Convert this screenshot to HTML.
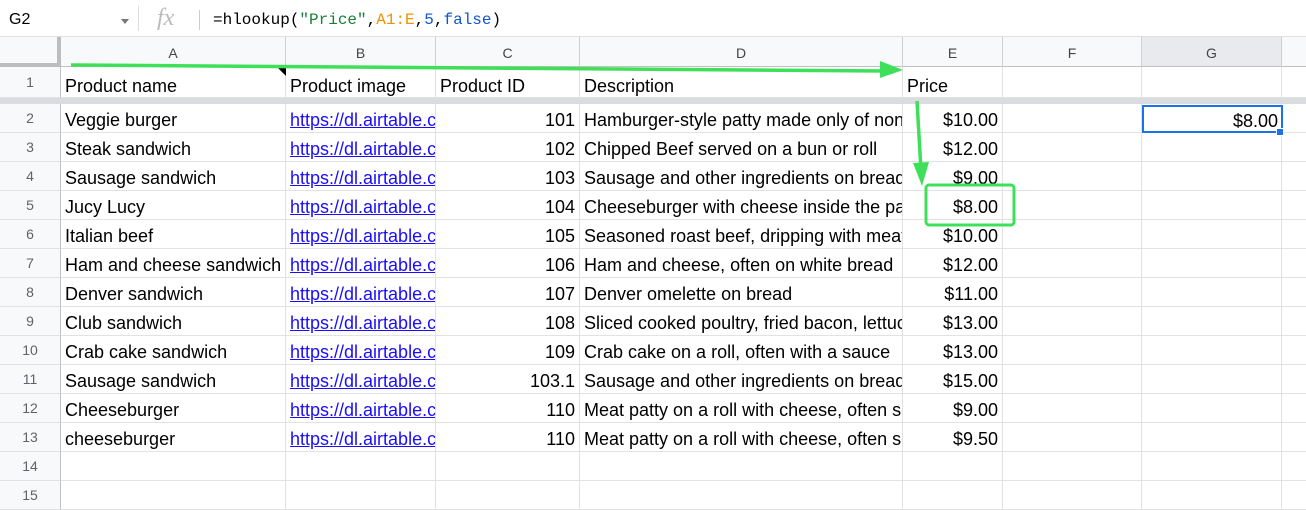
<!DOCTYPE html>
<html><head><meta charset="utf-8"><style>
*{box-sizing:border-box;margin:0;padding:0}
body{width:1306px;height:499px;overflow:hidden;background:#fff;font-family:"Liberation Sans",Arial,sans-serif;position:relative}
.fb{position:absolute;left:0;top:0;width:1306px;height:37px;border-bottom:1px solid #e0e0e0;background:#fff}
.row{position:absolute;left:0;display:flex;height:29px}
.c{border-right:1px solid #e2e2e2;border-bottom:1px solid #e2e2e2;font-size:18px;color:#000;white-space:nowrap;overflow:hidden;padding:0 4px;line-height:32px;flex:none}
.rh{width:61px;background:#f8f9fa;color:#5f6368;text-align:center;font-size:14px;border-right:1px solid #c0c0c0;border-bottom:1px solid #e2e2e2;padding:0;line-height:29px}
.w0{width:225px}.w1{width:150px}.w2{width:144px}.w3{width:323px}.w4{width:100px}.w5{width:139px}.w6{width:140px}.w7{width:30px}
.r{text-align:right}
a{color:#1a0dff;text-decoration:underline}
.hd .c{background:#f8f9fa;color:#444;font-size:14px;text-align:center;border-bottom:1px solid #c0c0c0;border-right:1px solid #d0d0d0;line-height:32px}
</style></head><body>
<div class="fb">
 <div style="position:absolute;left:9px;top:11px;font-size:16px;color:#000">G2</div>
 <div style="position:absolute;left:121px;top:19px;width:0;height:0;border-left:4px solid transparent;border-right:4px solid transparent;border-top:5px solid #777"></div>
 <div style="position:absolute;left:138px;top:6px;width:1px;height:25px;background:#ddd"></div>
 <div style="position:absolute;left:157px;top:5px;font-size:24px;font-style:italic;font-family:'Liberation Serif',serif;color:#bbb">fx</div>
 <div style="position:absolute;left:199px;top:10px;width:1px;height:20px;background:#ccc"></div>
 <div style="position:absolute;left:213px;top:11px;font-family:'Liberation Mono',monospace;font-size:16px;color:#000">=hlookup(<span style="color:#188038">"Price"</span>,<span style="color:#f09300">A1:E</span>,<span style="color:#1155cc">5</span>,<span style="color:#1155cc">false</span>)</div>
</div>
<div class="row hd" style="top:37px;height:30px">
 <div class="c rh" style="background:#f8f9fa;border-right:4px solid #bdbdbd;border-bottom:4px solid #bdbdbd;width:61px"></div>
 <div class="c w0">A</div><div class="c w1">B</div><div class="c w2">C</div><div class="c w3">D</div><div class="c w4">E</div><div class="c w5">F</div><div class="c w6" style="background:#e8eaed">G</div><div class="c w7"></div>
</div>
<div class="row" style="top:67px;height:31px">
 <div class="c rh" style="line-height:30px">1</div>
 <div class="c w0" style="line-height:38px">Product name</div><div class="c w1" style="line-height:38px">Product image</div><div class="c w2" style="line-height:38px">Product ID</div><div class="c w3" style="line-height:38px">Description</div><div class="c w4" style="line-height:38px">Price</div><div class="c w5"></div><div class="c w6"></div><div class="c w7"></div>
</div>
<div style="position:absolute;left:0;top:98px;width:1306px;height:6px;background:#dadce0"></div>
<div style="position:absolute;left:278px;top:68px;width:0;height:0;border-left:8px solid transparent;border-top:8px solid #000"></div>

<div class="row" style="top:104px"><div class="c rh">2</div><div class="c w0">Veggie burger</div><div class="c w1"><a>https://dl.airtable.com</a></div><div class="c w2 r">101</div><div class="c w3">Hamburger-style patty made only of non</div><div class="c w4 r">$10.00</div><div class="c w5"></div><div class="c w6"></div><div class="c w7"></div></div>
<div class="row" style="top:133px"><div class="c rh">3</div><div class="c w0">Steak sandwich</div><div class="c w1"><a>https://dl.airtable.com</a></div><div class="c w2 r">102</div><div class="c w3">Chipped Beef served on a bun or roll</div><div class="c w4 r">$12.00</div><div class="c w5"></div><div class="c w6"></div><div class="c w7"></div></div>
<div class="row" style="top:162px"><div class="c rh">4</div><div class="c w0">Sausage sandwich</div><div class="c w1"><a>https://dl.airtable.com</a></div><div class="c w2 r">103</div><div class="c w3">Sausage and other ingredients on bread</div><div class="c w4 r">$9.00</div><div class="c w5"></div><div class="c w6"></div><div class="c w7"></div></div>
<div class="row" style="top:191px"><div class="c rh">5</div><div class="c w0">Jucy Lucy</div><div class="c w1"><a>https://dl.airtable.com</a></div><div class="c w2 r">104</div><div class="c w3">Cheeseburger with cheese inside the patty</div><div class="c w4 r">$8.00</div><div class="c w5"></div><div class="c w6"></div><div class="c w7"></div></div>
<div class="row" style="top:220px"><div class="c rh">6</div><div class="c w0">Italian beef</div><div class="c w1"><a>https://dl.airtable.com</a></div><div class="c w2 r">105</div><div class="c w3">Seasoned roast beef, dripping with meat</div><div class="c w4 r">$10.00</div><div class="c w5"></div><div class="c w6"></div><div class="c w7"></div></div>
<div class="row" style="top:249px"><div class="c rh">7</div><div class="c w0">Ham and cheese sandwich</div><div class="c w1"><a>https://dl.airtable.com</a></div><div class="c w2 r">106</div><div class="c w3">Ham and cheese, often on white bread</div><div class="c w4 r">$12.00</div><div class="c w5"></div><div class="c w6"></div><div class="c w7"></div></div>
<div class="row" style="top:278px"><div class="c rh">8</div><div class="c w0">Denver sandwich</div><div class="c w1"><a>https://dl.airtable.com</a></div><div class="c w2 r">107</div><div class="c w3">Denver omelette on bread</div><div class="c w4 r">$11.00</div><div class="c w5"></div><div class="c w6"></div><div class="c w7"></div></div>
<div class="row" style="top:307px"><div class="c rh">9</div><div class="c w0">Club sandwich</div><div class="c w1"><a>https://dl.airtable.com</a></div><div class="c w2 r">108</div><div class="c w3">Sliced cooked poultry, fried bacon, lettuce</div><div class="c w4 r">$13.00</div><div class="c w5"></div><div class="c w6"></div><div class="c w7"></div></div>
<div class="row" style="top:336px"><div class="c rh">10</div><div class="c w0">Crab cake sandwich</div><div class="c w1"><a>https://dl.airtable.com</a></div><div class="c w2 r">109</div><div class="c w3">Crab cake on a roll, often with a sauce</div><div class="c w4 r">$13.00</div><div class="c w5"></div><div class="c w6"></div><div class="c w7"></div></div>
<div class="row" style="top:365px"><div class="c rh">11</div><div class="c w0">Sausage sandwich</div><div class="c w1"><a>https://dl.airtable.com</a></div><div class="c w2 r">103.1</div><div class="c w3">Sausage and other ingredients on bread</div><div class="c w4 r">$15.00</div><div class="c w5"></div><div class="c w6"></div><div class="c w7"></div></div>
<div class="row" style="top:394px"><div class="c rh">12</div><div class="c w0">Cheeseburger</div><div class="c w1"><a>https://dl.airtable.com</a></div><div class="c w2 r">110</div><div class="c w3">Meat patty on a roll with cheese, often served</div><div class="c w4 r">$9.00</div><div class="c w5"></div><div class="c w6"></div><div class="c w7"></div></div>
<div class="row" style="top:423px"><div class="c rh">13</div><div class="c w0">cheeseburger</div><div class="c w1"><a>https://dl.airtable.com</a></div><div class="c w2 r">110</div><div class="c w3">Meat patty on a roll with cheese, often served</div><div class="c w4 r">$9.50</div><div class="c w5"></div><div class="c w6"></div><div class="c w7"></div></div>
<div class="row" style="top:452px"><div class="c rh">14</div><div class="c w0"></div><div class="c w1"></div><div class="c w2"></div><div class="c w3"></div><div class="c w4"></div><div class="c w5"></div><div class="c w6"></div><div class="c w7"></div></div>
<div class="row" style="top:481px"><div class="c rh">15</div><div class="c w0"></div><div class="c w1"></div><div class="c w2"></div><div class="c w3"></div><div class="c w4"></div><div class="c w5"></div><div class="c w6"></div><div class="c w7"></div></div>

<div style="position:absolute;left:1142px;top:105px;width:141px;height:28px;border:2px solid #1a73e8;text-align:right;font-size:18px;line-height:28px;padding-right:3px">$8.00</div>
<div style="position:absolute;left:1276px;top:128px;width:8px;height:8px;background:#1a73e8;border:1px solid #fff"></div>

<svg style="position:absolute;left:0;top:0" width="1306" height="499">
 <path d="M71 65 L885 71" stroke="#3ee05a" stroke-width="3.5" fill="none"/>
 <path d="M880 61 L903 70 L880 78 Z" fill="#3ee05a"/>
 <path d="M917 101 L921 170" stroke="#3ee05a" stroke-width="3.5" fill="none"/>
 <path d="M913 163 L922 186 L929 162 Z" fill="#3ee05a"/>
 <rect x="926" y="185" width="88" height="40" rx="3" fill="none" stroke="#3ee05a" stroke-width="3"/>
</svg>
</body></html>
